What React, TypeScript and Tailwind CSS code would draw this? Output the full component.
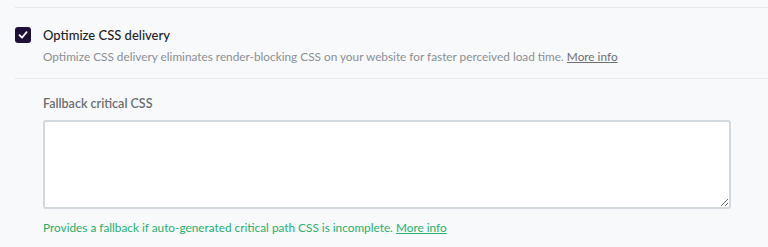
export default function App() {
  return (
    <div className="w-[768px] h-[247px] bg-[#f8f9fa] overflow-hidden" style={{ fontFamily: "Lato, 'Noto Sans', sans-serif" }}>
      <div className="pt-[7px] pl-[15px]">
        <div className="border-t border-[#e6e8eb]" />
        <div className="flex items-start gap-[12px] pt-[19px] pb-[13px]">
          <div className="w-[16px] h-[16px] rounded-[3px] bg-[#1e1038] flex items-center justify-center shrink-0">
            <svg width="10" height="10" viewBox="0 0 10 10" fill="none">
              <path d="M1.5 5.2 L4 7.6 L8.6 2.2" stroke="white" strokeWidth="1.8" strokeLinecap="round" strokeLinejoin="round" />
            </svg>
          </div>
          <div className="flex flex-col">
            <div className="text-[13px] leading-[16px] text-[#1d2327] font-medium">Optimize CSS delivery</div>
            <div className="text-[11.8px] leading-[16px] text-[#8c8f94] mt-[6px]">
              Optimize CSS delivery eliminates render-blocking CSS on your website for faster perceived load time.{" "}
              <a className="underline text-[#6c6f74]">More info</a>
            </div>
          </div>
        </div>
        <div className="border-t border-[#e6e8eb]" />
        <div className="pl-[28px] pt-[17px]">
          <div className="text-[12.5px] leading-[16px] font-semibold text-[#6b6e72]">Fallback critical CSS</div>
          <textarea className="block mt-[8px] w-[688px] h-[89px] bg-white border-2 border-[#d3d7de] rounded-[3px] outline-none" />
          <div className="text-[11.8px] leading-[16px] text-[#27b06e] mt-[11px]">
            Provides a fallback if auto-generated critical path CSS is incomplete.{" "}
            <a className="underline">More info</a>
          </div>
        </div>
      </div>
    </div>
  );
}
